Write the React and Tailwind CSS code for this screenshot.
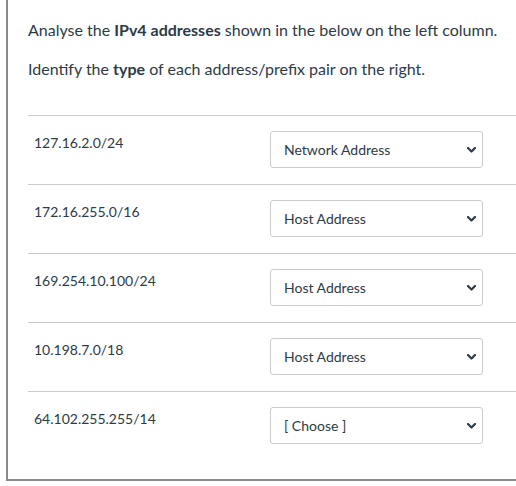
import React from 'react';

const rows = [
  { addr: '127.16.2.0/24', value: 'Network Address' },
  { addr: '172.16.255.0/16', value: 'Host Address' },
  { addr: '169.254.10.100/24', value: 'Host Address' },
  { addr: '10.198.7.0/18', value: 'Host Address' },
  { addr: '64.102.255.255/14', value: '[ Choose ]' },
];

function Chevron() {
  return (
    <svg width="9" height="6" viewBox="0 0 9 6" className="text-[#2d3b45]">
      <path d="M1 1 L4.5 4.5 L8 1" fill="none" stroke="currentColor" strokeWidth="2.2" strokeLinecap="round" strokeLinejoin="round" />
    </svg>
  );
}

export default function App() {
  return (
    <div className="bg-white w-[516px] h-[486px] overflow-hidden font-['Lato','Noto_Sans',sans-serif] text-[#2d3b45]">
      <div className="ml-[6px] w-[540px] border-l-2 border-b-2 border-[#8a8a8a] pl-[20px]">
        {/* Question text */}
        <div className="pt-[19px] pb-[35px] text-[16px] leading-[22px]">
          <p>
            Analyse the <strong className="font-bold">IPv4 addresses</strong> shown in the below on the left column.
          </p>
          <p className="mt-[17px]">
            Identify the <strong className="font-bold">type</strong> of each address/prefix pair on the right.
          </p>
        </div>

        {/* Answer rows */}
        {rows.map((r, i) => (
          <div
            key={i}
            className={`flex items-start border-t border-[#c7cdd1] pt-[15px] ${i === rows.length - 1 ? 'pb-[35px]' : 'pb-[16px]'}`}
          >
            <div className="w-[242px] pl-[6px] mt-[2px] text-[14px] leading-[20px]">{r.addr}</div>
            <div className="w-[213px] h-[37px] border border-[#c7cdd1] rounded-[3px] flex items-center justify-between pl-[13px] pr-[6px] text-[14px]">
              <span>{r.value}</span>
              <Chevron />
            </div>
          </div>
        ))}
      </div>
    </div>
  );
}
